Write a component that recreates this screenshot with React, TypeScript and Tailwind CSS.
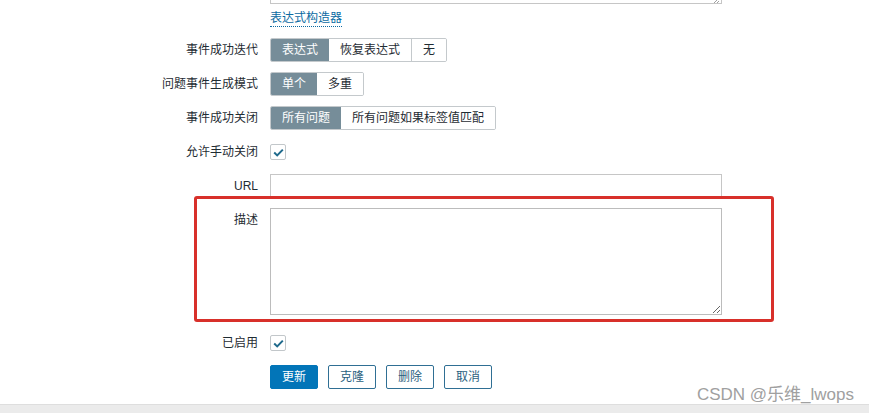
import React from "react";

const Label = ({ children, top = false }: { children: React.ReactNode; top?: boolean }) => (
  <div className={`w-[258px] shrink-0 text-right leading-[24px] ${top ? "self-start" : ""}`}>{children}</div>
);

const Check = () => (
  <div className="flex h-[16px] w-[16px] items-center justify-center rounded-[2px] border border-[#c2c7ca] bg-white">
    <svg width="11" height="9" viewBox="0 0 11 9">
      <path d="M1.2 4.6 L4.2 7.4 L9.8 1.6" fill="none" stroke="#1f6a8c" strokeWidth="2" />
    </svg>
  </div>
);

const Seg = ({ items }: { items: string[] }) => (
  <div className="flex h-[24px] overflow-hidden rounded-[2px] border border-[#c4c9cc]">
    {items.map((t, i) => (
      <div
        key={t}
        className={`flex items-center px-[11px] leading-none ${
          i === 0 ? "bg-[#768d99] text-white" : "bg-white text-[#1f2c33]"
        } ${i > 1 ? "border-l border-[#c4c9cc]" : ""}`}
      >
        {t}
      </div>
    ))}
  </div>
);

export default function App() {
  return (
    <div
      className="relative h-[413px] w-full overflow-hidden bg-white text-[12px] text-[#1f2c33]"
      style={{ fontFamily: '"Liberation Sans", Arial, "Noto Sans CJK SC", sans-serif' }}
    >
      <div className="flex flex-col">
        {/* tail of previous textarea */}
        <div className="flex gap-3">
          <div className="w-[258px] shrink-0" />
          <div className="flex h-[4px] w-[452px] items-end justify-end border-x border-b border-[#c6c6c6] pr-[2px]">
            <svg width="6" height="3" viewBox="0 0 6 3">
              <path d="M1 3 L4 0 M4 3 L6 1" stroke="#888" strokeWidth="0.8" />
            </svg>
          </div>
        </div>
        <div className="mt-[4px] flex h-[20px] gap-3">
          <div className="w-[258px] shrink-0" />
          <span className="self-center border-b border-dotted border-[#0b6aa2] leading-[16px] text-[#0b6aa2]">表达式构造器</span>
        </div>

        <div className="mt-[10px] flex items-center gap-3">
          <Label>事件成功迭代</Label>
          <Seg items={["表达式", "恢复表达式", "无"]} />
        </div>
        <div className="mt-[10px] flex items-center gap-3">
          <Label>问题事件生成模式</Label>
          <Seg items={["单个", "多重"]} />
        </div>
        <div className="mt-[10px] flex items-center gap-3">
          <Label>事件成功关闭</Label>
          <Seg items={["所有问题", "所有问题如果标签值匹配"]} />
        </div>
        <div className="mt-[10px] flex h-[24px] items-center gap-3">
          <Label>允许手动关闭</Label>
          <Check />
        </div>
        <div className="mt-[10px] flex items-center gap-3">
          <Label>URL</Label>
          <input className="h-[24px] w-[452px] border border-[#c6c6c6] bg-white outline-none" />
        </div>
        <div className="relative mt-[10px] flex gap-3">
          <Label top>描述</Label>
          <textarea className="block h-[107px] w-[452px] resize-y border border-[#bcbcbc] bg-white outline-none" />
          <div className="pointer-events-none absolute left-[194px] top-[-12px] h-[126px] w-[580px] rounded-[3px] border-[3px] border-[#d8302a]" />
        </div>
        <div className="mt-[16px] flex h-[24px] items-center gap-3">
          <Label>已启用</Label>
          <Check />
        </div>
        <div className="mt-[10px] flex gap-3">
          <div className="w-[258px] shrink-0" />
          <div className="flex gap-[10px]">
            <button className="h-[24px] w-[48px] rounded-[2px] border border-[#0275b8] bg-[#0275b8] text-white">更新</button>
            <button className="h-[24px] w-[48px] rounded-[2px] border border-[#2f6f94] bg-white text-[#2b5f80]">克隆</button>
            <button className="h-[24px] w-[48px] rounded-[2px] border border-[#2f6f94] bg-white text-[#2b5f80]">删除</button>
            <button className="h-[24px] w-[48px] rounded-[2px] border border-[#2f6f94] bg-white text-[#2b5f80]">取消</button>
          </div>
        </div>
        <div className="mt-[15px] h-[20px] border-t border-[#dedede] bg-[#ebebeb]" />
      </div>
      <div
        className="absolute right-[15px] top-[385px] text-[17px] leading-[20px] text-[#a0a0a0]"
        style={{ fontFamily: '"Liberation Sans", Arial, "Noto Sans CJK SC", sans-serif' }}
      >
        CSDN @乐维_lwops
      </div>
    </div>
  );
}
